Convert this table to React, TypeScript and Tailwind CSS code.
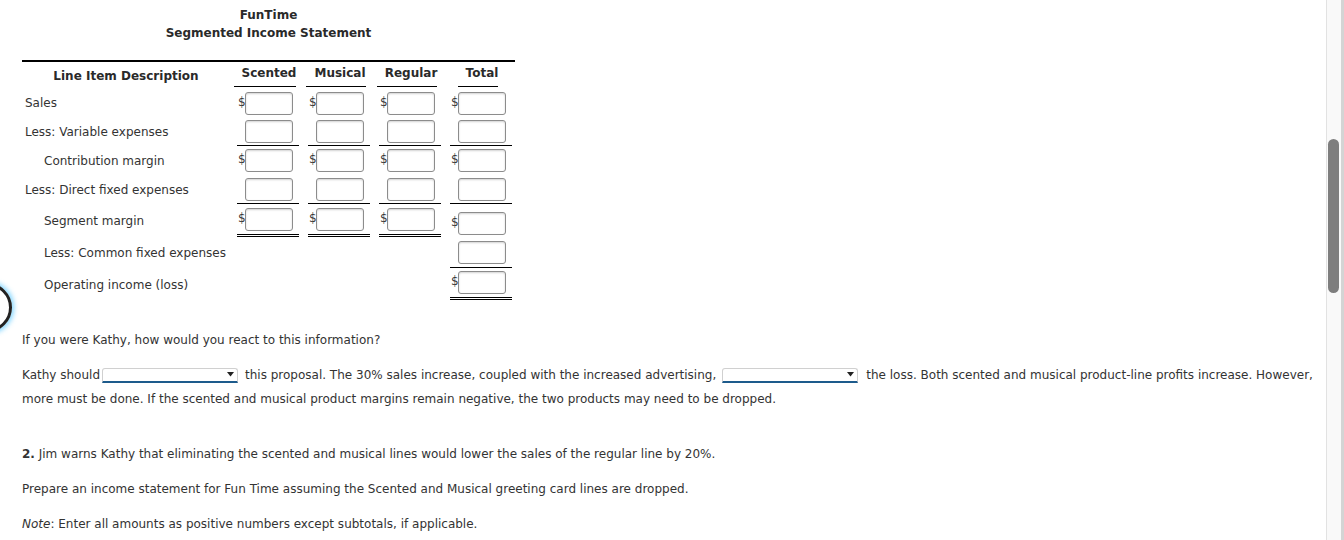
type Cell = {
  dollar?: boolean;
  input?: boolean;
  line?: "single" | "double";
  pt?: boolean;
};

const Box = () => (
  <div className="w-[48px] h-[23px] rounded-[3px] border border-[#8c8c8c] bg-white shadow-[inset_0_1px_2px_rgba(0,0,0,0.18)]" />
);

function ValueCell({ cell }: { cell?: Cell }) {
  if (!cell) return <div className="w-[62px]" />;
  const lineCls =
    cell.line === "double"
      ? "border-b-[3px] border-double border-black"
      : cell.line === "single"
        ? "border-b border-black"
        : "";
  return (
    <div className={`w-[62px] flex flex-col ${cell.line === "double" && !cell.pt ? "pb-[1px]" : ""}`}>
      <div className={`flex-1 flex items-center ${lineCls} ${cell.pt ? "pt-[5px]" : ""}`}>
        <span className="w-[8px] pl-[1px] -mt-[3px] text-[#3a3a3a]">{cell.dollar ? "$" : ""}</span>
        {cell.input && <Box />}
      </div>
    </div>
  );
}

function Row({
  label,
  indent,
  h,
  cells,
}: {
  label: string;
  indent?: boolean;
  h: string;
  cells: (Cell | undefined)[];
}) {
  return (
    <div className={`flex ${h}`}>
      <div className={`w-[215px] flex items-center ${indent ? "pl-[22px]" : "pl-[3px]"}`}>{label}</div>
      <div className="flex gap-[9px]">
        {cells.map((c, i) => (
          <ValueCell key={i} cell={c} />
        ))}
      </div>
    </div>
  );
}

function Select() {
  return (
    <div className="w-[136px] h-[15px] rounded-t-[3px] border border-[#d0d0d0] border-b-2 border-b-[#1d5b8c] bg-white flex items-center justify-end pr-[3px]">
      <svg width="7" height="5" viewBox="0 0 7 5">
        <path d="M0 0 H7 L3.5 4.5 Z" fill="#222" />
      </svg>
    </div>
  );
}

export default function App() {
  const full: Cell = { dollar: true, input: true };
  const plainLine: Cell = { input: true, line: "single" };
  const dbl: Cell = { dollar: true, input: true, line: "double" };
  const headers = ["Scented", "Musical", "Regular", "Total"];

  return (
    <div className="flex h-[540px] overflow-hidden bg-white text-[12px] text-[#333] font-['DejaVu_Sans',sans-serif]">
      <div className="relative flex-1 pl-[22px]">
        {/* Title */}
        <div className="w-[493px] pt-[6px] text-center font-bold leading-[18px] text-[#2a2a2a]">
          <div>FunTime</div>
          <div>Segmented Income Statement</div>
        </div>

        {/* Statement table */}
        <div className="w-[493px] mt-[18px] border-t-2 border-black">
          <div className="flex h-[27px]">
            <div className="w-[215px] flex items-center justify-center pr-[7px] font-bold text-[#2a2a2a]">
              Line Item Description
            </div>
            <div className="flex gap-[9px]">
              {headers.map((t) => (
                <div key={t} className="w-[62px] flex items-end justify-center pr-[6px] pb-[2px]">
                  <span className="pl-2 pb-[5px] leading-[16px] border-b border-black font-bold text-[#2a2a2a] whitespace-nowrap">
                    {t}
                  </span>
                </div>
              ))}
            </div>
          </div>
          <Row label="Sales" h="h-[28px]" cells={[full, full, full, full]} />
          <Row label="Less: Variable expenses" h="h-[29px]" cells={[plainLine, plainLine, plainLine, plainLine]} />
          <Row label="Contribution margin" indent h="h-[29px]" cells={[full, full, full, full]} />
          <Row label="Less: Direct fixed expenses" h="h-[29px]" cells={[plainLine, plainLine, plainLine, plainLine]} />
          <Row label="Segment margin" indent h="h-[34px]" cells={[dbl, dbl, dbl, { dollar: true, input: true, pt: true }]} />
          <Row label="Less: Common fixed expenses" indent h="h-[30px]" cells={[undefined, undefined, undefined, plainLine]} />
          <Row label="Operating income (loss)" indent h="h-[33px]" cells={[undefined, undefined, undefined, dbl]} />
        </div>

        {/* Question */}
        <p className="mt-[30px] leading-[18px]">If you were Kathy, how would you react to this information?</p>
        <div className="mt-[14px] leading-[24px]">
          <div className="flex items-center h-[24px] whitespace-nowrap">
            <span>Kathy should</span>
            <span className="ml-[2px] mr-[7px]">
              <Select />
            </span>
            <span>this proposal. The 30% sales increase, coupled with the increased advertising,</span>
            <span className="ml-[6px] mr-[8px]">
              <Select />
            </span>
            <span>the loss. Both scented and musical product-line profits increase. However,</span>
          </div>
          <div className="h-[24px]">
            more must be done. If the scented and musical product margins remain negative, the two products may need to be dropped.
          </div>
        </div>

        <p className="mt-[34px] leading-[18px]">
          <span className="font-bold">2.</span> Jim warns Kathy that eliminating the scented and musical lines would lower the sales of the regular line by 20%.
        </p>
        <p className="mt-[17px] leading-[18px]">
          Prepare an income statement for Fun Time assuming the Scented and Musical greeting card lines are dropped.
        </p>
        <p className="mt-[17px] leading-[18px]">
          <span className="italic">Note</span>: Enter all amounts as positive numbers except subtotals, if applicable.
        </p>

        {/* step marker ring */}
        <div className="absolute left-[-37px] top-[283px] w-[49px] h-[49px] rounded-full border-[3px] border-[#222] shadow-[0_0_5px_2px_rgba(90,200,255,0.75)]" />
      </div>

      {/* Scrollbar */}
      <div className="w-[18px] flex border-l border-[#e2e2e2]">
        <div className="w-[14px] bg-[#f9f9f9]">
          <div className="mt-[139px] ml-[1px] w-[11px] h-[154px] rounded-full bg-[#7e7e7e]" />
        </div>
        <div className="w-[3px] bg-[#d4d4d4]" />
      </div>
    </div>
  );
}
